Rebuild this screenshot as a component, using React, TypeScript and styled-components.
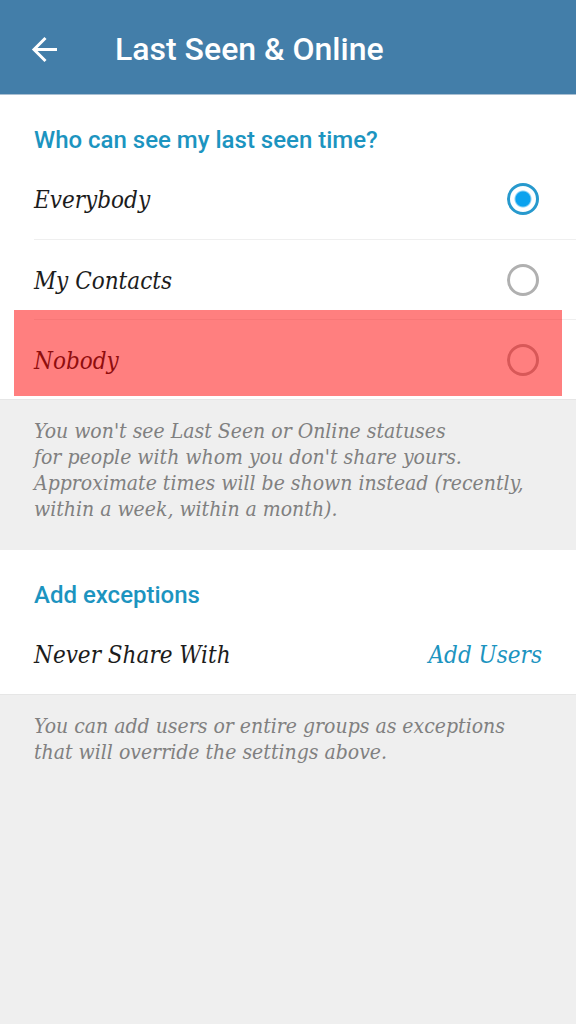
import React, { useState } from "react";
import styled, { createGlobalStyle } from "styled-components";

const GlobalStyle = createGlobalStyle`
  *, *::before, *::after { box-sizing: border-box; }
  body {
    margin: 0;
    background: #efefef;
    font-family: "DejaVu Serif Condensed", "DejaVu Serif", serif;
  }
`;

const Header = styled.header`
  display: flex;
  align-items: center;
  gap: 55px;
  height: 95px;
  padding: 4px 28px 0;
  background: #437ea9;
  border-bottom: 1px solid #a9bfd2;
  color: #fff;
`;

const BackButton = styled.button`
  display: flex;
  padding: 0;
  border: 0;
  background: none;
  color: inherit;
  cursor: pointer;
`;

const Title = styled.h1`
  margin: 0;
  font: 500 32px/40px Roboto, sans-serif;
`;

const Section = styled.section`
  background: #fff;
`;

const SectionTitle = styled.h2`
  margin: 0;
  padding: 30px 34px 4px;
  font: 500 24px/30px Roboto, sans-serif;
  color: #1c94c0;
`;

const Row = styled.div`
  position: relative;
  display: flex;
  align-items: center;
  justify-content: space-between;
  height: 80px;
  padding-right: 34px;
  margin-left: 34px;
  font-size: 24px;
  line-height: 32px;
  font-style: italic;
  color: #1c1c1c;

  & + & { border-top: 1px solid #efefef; }
`;

const OptionRow = styled(Row).attrs({ as: "label" })`
  padding-right: 37px;
  cursor: pointer;
` as typeof Row;

const RowText = styled.span`
  padding-top: 2px;
`;

const Radio = styled.input`
  appearance: none;
  width: 32px;
  height: 32px;
  margin: 0;
  border: 3px solid #b0b0b0;
  border-radius: 50%;

  &:checked {
    border-color: #2799cd;
    background: radial-gradient(circle, #0ba2ee 7px, #fff 9px);
  }
`;

const Highlight = styled.span`
  position: absolute;
  inset: -10px 14px 3px -20px;
  background: rgba(255, 0, 0, 0.5);
  pointer-events: none;
`;

const LinkButton = styled.button`
  padding: 2px 0 0;
  border: 0;
  background: none;
  font: inherit;
  color: #1c94c0;
  cursor: pointer;
`;

const Note = styled.p`
  margin: 0;
  padding: 18px 34px 28px;
  border-top: 1px solid #e6e6e6;
  font-size: 21px;
  line-height: 26px;
  font-style: italic;
  color: #808080;
`;

const options = ["Everybody", "My Contacts", "Nobody"];

export default function App() {
  const [selected, setSelected] = useState("Everybody");

  return (
    <>
      <GlobalStyle />
      <Header>
        <BackButton aria-label="Back">
          <svg width="32" height="32" viewBox="0 0 32 32" fill="none" stroke="currentColor" strokeWidth="3">
            <path d="M29 16.500H6M17.500 5L6 16.500l11.500 11.500" />
          </svg>
        </BackButton>
        <Title>Last Seen &amp; Online</Title>
      </Header>
      <main>
        <Section role="radiogroup" aria-labelledby="who">
          <SectionTitle id="who">Who can see my last seen time?</SectionTitle>
          {options.map((name) => (
            <OptionRow key={name}>
              <RowText>{name}</RowText>
              <Radio
                type="radio"
                name="visibility"
                checked={selected === name}
                onChange={() => setSelected(name)}
              />
              {name === "Nobody" && <Highlight />}
            </OptionRow>
          ))}
        </Section>
        <Note>
          You won't see Last Seen or Online statuses
          <br />
          for people with whom you don't share yours. Approximate times will be
          shown instead (recently, within a week, within a month).
        </Note>
        <Section>
          <SectionTitle>Add exceptions</SectionTitle>
          <Row>
            <RowText>Never Share With</RowText>
            <LinkButton>Add Users</LinkButton>
          </Row>
        </Section>
        <Note>
          You can add users or entire groups as exceptions that will override
          the settings above.
        </Note>
      </main>
    </>
  );
}
